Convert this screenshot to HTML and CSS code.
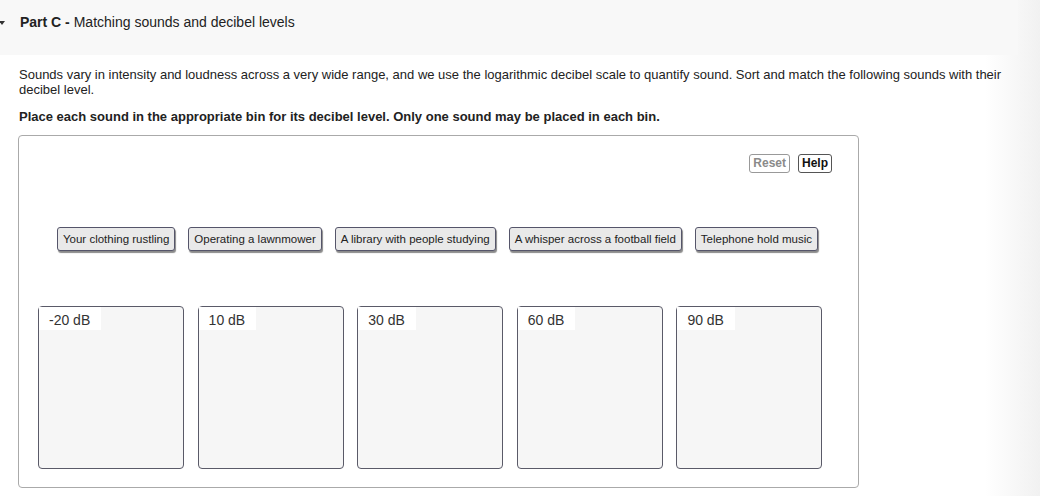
FILE: index.html
```html
<!DOCTYPE html>
<html>
<head>
<meta charset="utf-8">
<link rel="stylesheet" href="styles.css">
</head>
<body>
<div class="page">
  <div class="header">
    <span class="caret"></span>
    <h2 class="title"><b>Part C -</b> Matching sounds and decibel levels</h2>
  </div>
  <div class="content">
    <p class="intro">Sounds vary in intensity and loudness across a very wide range, and we use the logarithmic decibel scale to quantify sound. Sort and match the following sounds with their decibel level.</p>
    <p class="instr">Place each sound in the appropriate bin for its decibel level. Only one sound may be placed in each bin.</p>
    <div class="box">
      <div class="tools">
        <button class="btn reset">Reset</button>
        <button class="btn help">Help</button>
      </div>
      <div class="chips">
        <span class="chip">Your clothing rustling</span>
        <span class="chip">Operating a lawnmower</span>
        <span class="chip">A library with people studying</span>
        <span class="chip">A whisper across a football field</span>
        <span class="chip">Telephone hold music</span>
      </div>
      <div class="bins">
        <div class="bin"><span class="label">-20 dB</span></div>
        <div class="bin"><span class="label">10 dB</span></div>
        <div class="bin"><span class="label">30 dB</span></div>
        <div class="bin"><span class="label">60 dB</span></div>
        <div class="bin"><span class="label">90 dB</span></div>
      </div>
    </div>
  </div>
</div>
</body>
</html>
```

FILE: styles.css
```css
html, body {
  margin: 0;
  padding: 0;
  background: #ffffff;
}
body {
  font-family: "Liberation Sans", Arial, Helvetica, sans-serif;
  color: #222;
  background: linear-gradient(to right, #ffffff 0, #ffffff 985px, #f1f1f1 1040px);
  height: 496px;
  overflow: hidden;
}
.page {
  width: 1018px;
}
.header {
  background: #f8f8f8;
  height: 55px;
  display: flex;
  align-items: flex-start;
}
.caret {
  width: 0;
  height: 0;
  margin-top: 21px;
  border-left: 3px solid transparent;
  border-right: 3px solid transparent;
  border-top: 4px solid #333;
  margin-left: -1px;
}
.title {
  margin: 14px 0 0 15px;
  font-size: 14px;
  font-weight: normal;
  color: #222;
  line-height: 17px;
}
.title b {
  font-weight: bold;
}
.content {
  padding: 12px 0 0 19px;
}
.intro {
  margin: 0;
  width: 990px;
  font-size: 13px;
  line-height: 15px;
  color: #222;
}
.instr {
  margin: 12px 0 0 0;
  font-size: 13px;
  line-height: 15px;
  font-weight: bold;
  color: #222;
}
.box {
  margin-top: 11px;
  margin-left: -1px;
  width: 841px;
  height: 353px;
  border: 1px solid #aaaaaa;
  border-radius: 4px;
  box-sizing: border-box;
  padding: 18px 26px 0 19px;
}
.tools {
  display: flex;
  justify-content: flex-end;
  gap: 8px;
}
.btn {
  font-family: "Liberation Sans", Arial, sans-serif;
  font-size: 12px;
  font-weight: bold;
  height: 19px;
  padding: 0 3px;
  background: #fff;
  border: 1px solid #777;
  border-radius: 3px;
  line-height: 17px;
}
.btn.reset {
  color: #8a8a8a;
  border-color: #999;
}
.btn.help {
  color: #111;
  border-color: #555;
}
.chips {
  margin-top: 54px;
  display: flex;
  justify-content: center;
  gap: 13px;
  margin-left: -19px;
  margin-right: -24px;
}
.chip {
  display: inline-block;
  font-size: 11.5px;
  line-height: 22px;
  height: 22px;
  padding: 0 5px;
  background: #e9e9e9;
  border: 1px solid #55556a;
  border-radius: 3px;
  box-shadow: 1px 2px 1px #8a8a8a;
  color: #222;
  white-space: nowrap;
}
.bins {
  margin-top: 55px;
  display: flex;
  gap: 13.6px;
}
.bin {
  width: 146px;
  height: 163px;
  box-sizing: border-box;
  background: #f6f6f6;
  border: 1.5px solid #5a5a68;
  border-radius: 4px;
  display: flex;
  align-items: flex-start;
}
.label {
  display: inline-block;
  background: #ffffff;
  font-size: 14px;
  line-height: 16px;
  color: #333;
  padding: 5px 11px 2px 10px;
}
```
